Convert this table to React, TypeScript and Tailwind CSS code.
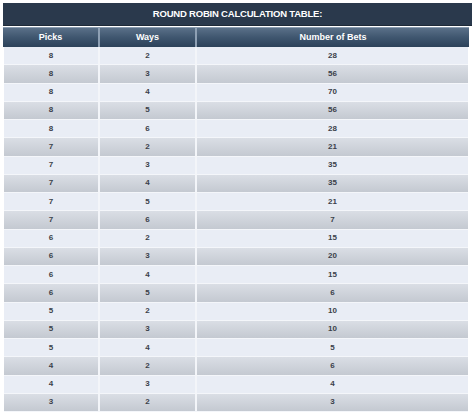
import React from "react";

const rows: [number, number, number][] = [
  [8, 2, 28], [8, 3, 56], [8, 4, 70], [8, 5, 56], [8, 6, 28],
  [7, 2, 21], [7, 3, 35], [7, 4, 35], [7, 5, 21], [7, 6, 7],
  [6, 2, 15], [6, 3, 20], [6, 4, 15], [6, 5, 6], [5, 2, 10],
  [5, 3, 10], [5, 4, 5], [4, 2, 6], [4, 3, 4], [3, 2, 3],
];

export default function App() {
  return (
    <div className="w-[474px] h-[412px] bg-white overflow-hidden pt-[3px] pl-[3px] pr-[2px]" style={{ fontFamily: '"Liberation Sans", Arial, sans-serif' }}>
      <div className="h-[23px] bg-[#2a394c] flex items-center justify-center text-white text-[9.5px] font-bold tracking-[-0.2px] border-b border-[#1e2a38]">
        ROUND ROBIN CALCULATION TABLE:
      </div>
      <div className="mt-[1px] mr-[3px] h-[20px] flex bg-gradient-to-b from-[#5a7088] via-[#3f566f] to-[#2c425a] text-white text-[9px] font-bold border-t border-[#8a9cb0]">
        <div className="w-[97px] flex items-center justify-center border-r-2 border-[#8ea0b4]">Picks</div>
        <div className="w-[97px] flex items-center justify-center border-r-2 border-[#8ea0b4]">Ways</div>
        <div className="flex-1 flex items-center justify-center">Number of Bets</div>
      </div>
      <div className="mr-[4px] ml-[1px]">
        {rows.map((r, i) => (
          <div
            key={i}
            className={
              "h-[18.25px] flex text-[8px] font-bold text-[#3b3f4a] border-b border-[#f4f6fa] " +
              (i % 2 === 0
                ? "bg-[#e9edf5]"
                : "bg-gradient-to-b from-[#dadee5] to-[#c4c9d1]")
            }
          >
            <div className="w-[96px] flex items-center justify-center border-r-2 border-[#f3f5f9]">{r[0]}</div>
            <div className="w-[97px] flex items-center justify-center border-r-2 border-[#f3f5f9]">{r[1]}</div>
            <div className="flex-1 flex items-center justify-center">{r[2]}</div>
          </div>
        ))}
      </div>
    </div>
  );
}
